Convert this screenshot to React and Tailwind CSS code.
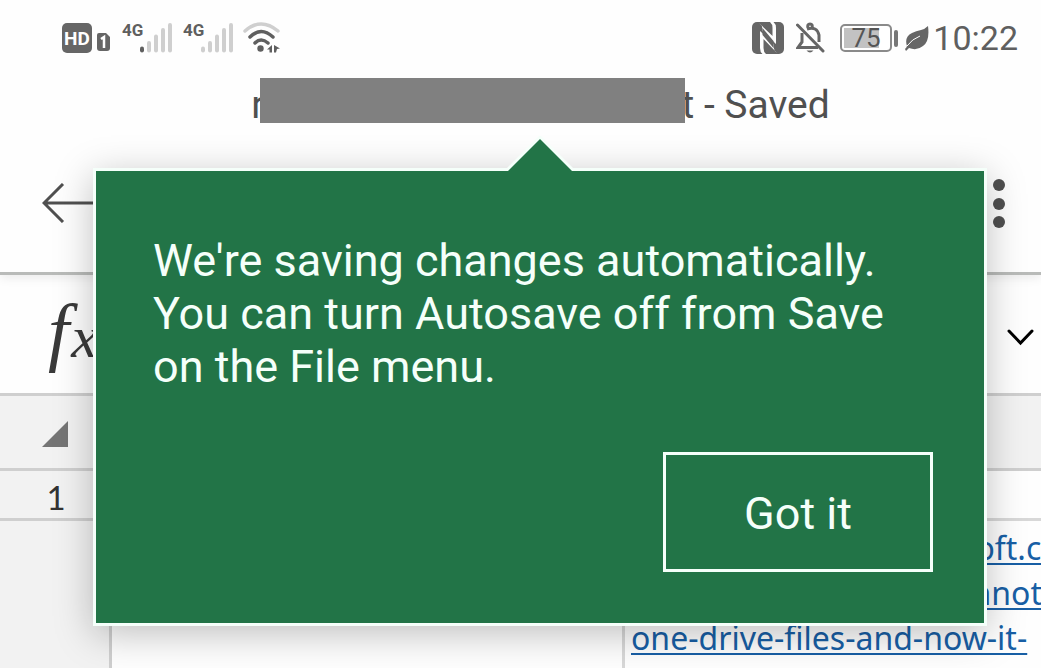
import React, { useState } from "react";

const SignalBars = ({ roaming }) => (
  <svg width="51" height="34" viewBox="0 0 51 34" aria-hidden="true">
    <text
      x="0"
      y="15"
      fill="#5f5f5f"
      className="font-['Roboto'] text-[17px] font-bold"
    >
      4G
    </text>
    <g stroke="#cfcfcf" strokeWidth="4" strokeLinecap="round">
      <path d="M20 27.5v2" stroke={roaming ? "#5f5f5f" : "#cfcfcf"} />
      <path d="M27 22v7.5M34 15.500v14M41 9v20.500M48 4v25.500" />
    </g>
  </svg>
);

const HdBadge = () => (
  <svg width="50" height="30" viewBox="0 0 50 30" aria-hidden="true">
    <rect width="30" height="30" rx="5" fill="#666" />
    <text
      x="15"
      y="22"
      fill="#fff"
      textAnchor="middle"
      className="font-['Roboto'] text-[19px] font-bold"
    >
      HD
    </text>
    <path d="M37 10h7l4 4v11q0 3-3 3h-7q-3 0-3-3V12q0-2 2-2z" fill="#666" />
    <path d="M39 16l3-2v11" fill="none" stroke="#fff" strokeWidth="2.500" />
  </svg>
);

const WifiIcon = () => (
  <svg width="38" height="32" viewBox="0 0 38 32" fill="none" aria-hidden="true">
    <g strokeWidth="3.500" strokeLinecap="round">
      <path d="M2 10Q18 -4 35 10" stroke="#cfcfcf" />
      <path d="M7 16Q18 5 30 16" stroke="#5f5f5f" />
      <path d="M12 22Q18 16 25 22" stroke="#5f5f5f" />
    </g>
    <circle cx="17.500" cy="27.500" r="3.200" fill="#5f5f5f" />
    <path d="M29 24v7.500h-2.500v-3H24zM31 24l6 3.500-3 .5-1 3.500h-2z" fill="#5f5f5f" />
  </svg>
);

const NfcIcon = () => (
  <svg width="32" height="32" viewBox="0 0 32 32" aria-hidden="true">
    <rect width="32" height="32" rx="5" fill="#666" />
    <path
      d="M7 1L20.500 14V6Q20.500 2 18 0H21.500Q24 2 24 6V22L10.500 9V7Q10 3 7 1Z"
      fill="#fff"
    />
    <path
      d="M25 31L11.500 17V26Q11.500 30 14 32H10.500Q8 30 8 26V9L21.500 22V25Q22 29 25 31Z"
      fill="#fff"
    />
    <path d="M10.500 6L21.500 19V26L10.500 13Z" fill="#666" />
  </svg>
);

const BellOffIcon = () => (
  <svg
    width="29"
    height="32"
    viewBox="0 0 29 32"
    fill="none"
    stroke="#666"
    strokeWidth="3"
    aria-hidden="true"
  >
    <path d="M1.500 3L27 29" strokeLinecap="round" />
    <path d="M6 11v9l-4 5.500h20M11 7q10-3 12 6v7M12 6q-1-4 2-4t2 4" />
    <path d="M10.500 28.500h7q-3.500 4-7 0z" fill="#666" stroke="none" />
  </svg>
);

const Battery = ({ level }) => (
  <svg width="58" height="28" viewBox="0 0 58 28" aria-hidden="true">
    <rect x="1" y="1" width="50" height="26" rx="4" fill="#fff" stroke="#8a8a8a" strokeWidth="2" />
    <rect x="4" y="4" width="35" height="20" fill="#c2c2c2" />
    <rect x="54" y="6" width="4" height="17" rx="2" fill="#777" />
    <text
      x="26"
      y="23"
      fill="#555"
      textAnchor="middle"
      className="font-['Roboto'] text-[26px]"
    >
      {level}
    </text>
  </svg>
);

const LeafIcon = () => (
  <svg width="24" height="25" viewBox="0 0 24 25" aria-hidden="true">
    <path d="M23 0Q25 15 18 20Q12 25 4 22L1 25L0 23Q2 21 2 20Q-1 11 7 7Q11 5 16 4Q20 3 23 0Z" fill="#666" />
    <path d="M2 20Q7 13 15 10" fill="none" stroke="#fff" strokeWidth="1" />
  </svg>
);

function StatusBar() {
  return (
    <div className="flex h-[78px] items-start justify-between pt-[21px] pr-[23px] pl-[62px] text-[#5f5f5f]">
      <div className="flex items-start">
        <div className="mr-[10px] pt-[2px]">
          <HdBadge />
        </div>
        <div className="mr-[10px]">
          <SignalBars roaming />
        </div>
        <div className="mr-[9px]">
          <SignalBars />
        </div>
        <WifiIcon />
      </div>
      <div className="flex h-[34px] items-center">
        <NfcIcon />
        <div className="mr-[15px] ml-3">
          <BellOffIcon />
        </div>
        <Battery level={75} />
        <div className="mr-1 ml-[7px]">
          <LeafIcon />
        </div>
        <span className="text-[34px] leading-[34px]">10:22</span>
      </div>
    </div>
  );
}

function AppHeader() {
  return (
    <header className="relative border-b-3 border-[#b9bbb9] shadow-[0_3px_10px_rgba(0,0,0,0.08)]">
      <StatusBar />
      <h1 className="flex h-[45px] items-center justify-center pl-[40px] text-[39px] leading-[45px] whitespace-pre text-[#505050]">
        <span className="pt-[10px]">r</span>
        <span className="relative -ml-1 h-[45px] w-[425px] bg-[#808080]" />
        <span className="-ml-1 pt-[10px]">t - Saved</span>
      </h1>
      <nav className="mt-[10px] flex h-[139px] items-center justify-between pr-[36px] pl-[42px]">
        <button type="button" aria-label="Back">
          <svg width="60" height="40" viewBox="0 0 60 40" fill="none" stroke="#505050" strokeWidth="3">
            <path d="M21 1L2 20L21 39M2 20H60" />
          </svg>
        </button>
        <button type="button" aria-label="More options">
          <svg width="12" height="50" viewBox="0 0 12 50" fill="#505050">
            <circle cx="6" cy="7" r="6" />
            <circle cx="6" cy="26" r="6" />
            <circle cx="6" cy="44" r="6" />
          </svg>
        </button>
      </nav>
    </header>
  );
}

function FormulaBar() {
  return (
    <div className="flex h-[121px] items-center justify-between border-b-3 border-[#cfcfcf] pr-[7px] pl-[48px]">
      <div className="font-['Liberation_Serif',serif] text-[76px] leading-[108px] text-[#3a3a3a] italic">
        f<span className="pl-[2px] text-[60px]">x</span>
      </div>
      <button type="button" aria-label="Expand formula bar" className="pt-[6px]">
        <svg width="27" height="17" viewBox="0 0 27 17" fill="none" stroke="#000" strokeWidth="3" strokeLinecap="round">
          <path d="M2 2L13.500 14L25 2" />
        </svg>
      </button>
    </div>
  );
}

const linkLines = [
  "https://answers.microsoft.com",
  "/en-us/office/forum/cannot",
  "one-drive-files-and-now-it-",
  "s/c7a24-b1-b91-d4-8d-4d-bdd",
];

function Sheet() {
  return (
    <table className="w-full table-fixed border-separate border-spacing-0 text-[32px] leading-[45px] font-normal">
      <thead>
        <tr className="h-[75px] bg-[#f2f2f2]">
          <th className="w-[112px] border-b-3 border-[#cfcfcf] p-0 pt-1">
            <svg className="ml-[42px]" width="26" height="26" viewBox="0 0 26 26" aria-label="Select all">
              <path d="M26 0V26H0Z" fill="#757575" />
            </svg>
          </th>
          <th className="w-[513px] border-b-3 border-[#cfcfcf]" />
          <th className="border-b-3 border-[#cfcfcf]" />
        </tr>
      </thead>
      <tbody>
        <tr className="h-[50px]">
          <th className="border-b-3 border-[#cfcfcf] bg-[#f2f2f2] p-0 text-center font-['Lato'] text-[33px] leading-[45px] font-normal text-[#333]">
            <span className="block h-[47px] overflow-hidden pt-1">1</span>
          </th>
          <td className="border-b-3 border-[#d8d8d8] p-0" />
          <td className="border-b-3 border-[#d8d8d8] p-0" />
        </tr>
        <tr className="align-top">
          <th className="border-r-3 border-[#cfcfcf] bg-[#f2f2f2]" />
          <td className="border-r-3 border-[#d8d8d8]" />
          <td className="overflow-hidden p-0 pt-1 pl-[6px] font-['Noto_Sans'] whitespace-nowrap">
            <a href="#thread" className="text-[#185fa5]">
              {linkLines.map((line) => (
                <span key={line} className="block underline decoration-2 underline-offset-3">
                  {line}
                </span>
              ))}
            </a>
          </td>
        </tr>
      </tbody>
    </table>
  );
}

function AutosaveCallout({ onClose }) {
  return (
    <div
      role="dialog"
      aria-label="Autosave"
      className="absolute top-[168px] right-[54px] left-[93px] border-3 border-[#f5fffa] bg-[#227447] pt-[63px] pr-[51px] pb-[51px] pl-[57px] text-[#f5fffa] shadow-[0_8px_36px_rgba(0,0,0,0.25)]"
    >
      <svg className="absolute -top-[35px] left-1/2 -translate-x-1/2" width="72" height="36" viewBox="0 0 72 36">
        <path d="M0 35L36 -1L72 35" fill="#f5fffa" />
        <path d="M3 36L36 3L69 36Z" fill="#227447" />
      </svg>
      <p className="max-w-[760px] text-[45px] leading-[53px]">
        We're saving changes automatically. You can turn Autosave off from Save
        on the File menu.
      </p>
      <div className="mt-[59px] flex justify-end">
        <button
          type="button"
          onClick={onClose}
          className="h-[120px] w-[270px] border-3 border-[#f5fffa] pt-1 text-[45px]"
        >
          Got it
        </button>
      </div>
    </div>
  );
}

export default function App() {
  const [showCallout, setShowCallout] = useState(true);

  return (
    <div className="relative h-screen overflow-hidden bg-[#fefefe] font-['Roboto',sans-serif]">
      <AppHeader />
      <FormulaBar />
      <Sheet />
      {showCallout && <AutosaveCallout onClose={() => setShowCallout(false)} />}
    </div>
  );
}
